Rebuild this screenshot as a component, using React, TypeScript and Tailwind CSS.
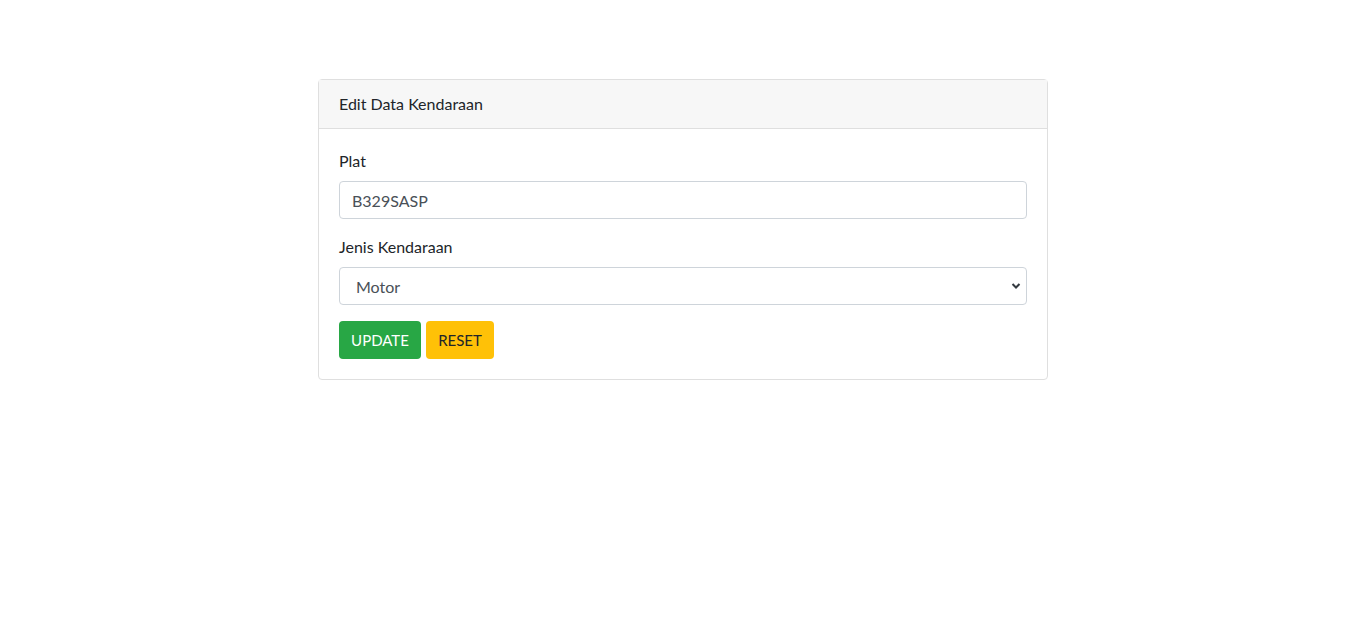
export default function App() {
  return (
    <div
      className="min-h-[625px] bg-white pt-[79px] text-[16px] leading-6 text-[#212529]"
      style={{ fontFamily: '"Segoe UI", Lato, "Noto Sans", sans-serif' }}
    >
      <div className="mx-auto w-[730px] rounded border border-[#dfdfdf] bg-white">
        <div className="border-b border-[#dfdfdf] bg-[#f7f7f7] px-5 py-3">Edit Data Kendaraan</div>
        <div className="p-5">
          <div className="mb-4">
            <label className="mb-2 block">Plat</label>
            <input
              defaultValue="B329SASP"
              className="block h-[38px] w-full rounded border border-[#ced4da] px-3 text-[#495057] outline-none"
            />
          </div>
          <div className="mb-4">
            <label className="mb-2 block">Jenis Kendaraan</label>
            <div className="relative">
              <select className="block h-[38px] w-full appearance-none rounded border border-[#ced4da] bg-white pl-4 pr-8 pt-px text-[#495057] outline-none">
                <option>Motor</option>
                <option>Mobil</option>
              </select>
              <svg
                className="pointer-events-none absolute right-[6px] top-[15px] h-[8px] w-[10px]"
                viewBox="0 0 10 8"
                fill="none"
                stroke="#343a40"
                strokeWidth="2"
              >
                <path d="M1.5 2l3.5 3.5L8.5 2" />
              </svg>
            </div>
          </div>
          <div className="flex gap-[5px]">
            <button className="h-[38px] w-[82px] rounded bg-[#28a745] text-[15px] text-white">UPDATE</button>
            <button className="h-[38px] w-[68px] rounded bg-[#ffc107] text-[15px] text-[#212529]">RESET</button>
          </div>
        </div>
      </div>
    </div>
  );
}
